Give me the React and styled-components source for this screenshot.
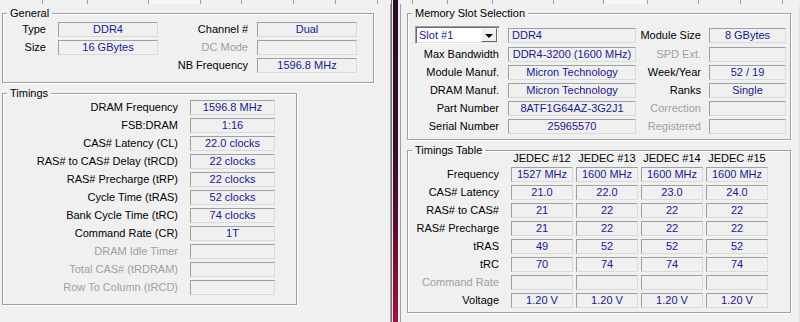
import React from "react";
import styled, { createGlobalStyle } from "styled-components";

const GlobalStyle = createGlobalStyle`
  html, body {
    margin: 0;
    padding: 0;
    background: #f0f0f0;
  }
  body {
    font-family: "Liberation Sans", Arial, sans-serif;
    font-size: 11px;
    color: #000;
  }
`;

const Screen = styled.div`
  display: flex;
  width: 800px;
  height: 322px;
  overflow: hidden;
  background: #f0f0f0;
`;

const Window = styled.div`
  flex: none;
  width: ${(p) => p.w}px;
  display: flex;
  flex-direction: column;
  box-sizing: border-box;
  padding-left: ${(p) => p.padLeft || 0}px;
  border-right: ${(p) => (p.edge ? "1px solid #6d6d6d" : "none")};
`;

const TabStrip = styled.div`
  display: flex;
  height: 4px;
  flex: none;
  margin-left: ${(p) => p.shift || 0}px;
`;

const Tab = styled.div`
  width: ${(p) => p.w}px;
  flex: ${(p) => (p.w ? "none" : "1")};
  box-sizing: border-box;
  border-right: ${(p) => (p.w ? "1px solid #a0a0a0" : "none")};
  background: ${(p) => (p.active ? "#f7f7f7" : "#f0f0f0")};
`;

const Page = styled.div`
  flex: 1;
  display: flex;
  flex-direction: column;
  align-items: flex-start;
  gap: 10px;
  padding: 9px 0 0 ${(p) => p.padLeft}px;
  border-left: ${(p) => (p.left ? "1px solid #a0a0a0" : "none")};
  border-right: 1px solid ${(p) => (p.left ? "#e3e3e3" : "#a0a0a0")};
`;

const Divider = styled.div`
  flex: none;
  width: 6px;
  box-sizing: border-box;
  border-left: 1px solid #f0f0f0;
  background: linear-gradient(
    to bottom,
    #2a0e23 0%,
    #33102a 45%,
    #5a0c31 70%,
    #8c0d3a 88%,
    #a3103f 100%
  );
`;

const Group = styled.div`
  position: relative;
  box-sizing: border-box;
  width: ${(p) => p.w}px;
  border: 1px solid #a0a0a0;
  box-shadow: inset 1px 1px 0 #fff, 1px 1px 0 #fff;
  padding: ${(p) => p.pad};
`;

const GroupTitle = styled.span`
  position: absolute;
  top: -7px;
  left: 4px;
  padding: 0 3px;
  line-height: 13px;
  background: #f0f0f0;
  color: #000;
`;

const Grid = styled.div`
  display: grid;
  grid-template-columns: ${(p) => p.cols};
  grid-auto-rows: 15px;
  grid-template-rows: ${(p) => p.rows || "none"};
  row-gap: 3px;
  column-gap: ${(p) => p.gap || 0}px;
  align-items: center;
`;

const Label = styled.div`
  text-align: right;
  padding-right: ${(p) => p.pr}px;
  line-height: 15px;
  white-space: nowrap;
  color: ${(p) => (p.dim ? "#a0a0a0" : "#000")};
`;

const Field = styled.div`
  box-sizing: border-box;
  height: 15px;
  border: 1px solid;
  border-color: #a0a0a0 #dadada #dadada #a0a0a0;
  line-height: 13px;
  text-align: ${(p) => (p.left ? "left" : "center")};
  padding-left: ${(p) => (p.left ? 3 : 0)}px;
  color: #17179a;
  white-space: nowrap;
  overflow: hidden;
`;

const Head = styled.div`
  text-align: center;
  line-height: 13px;
  padding-top: 1px;
  white-space: nowrap;
`;

const Combo = styled.div`
  box-sizing: border-box;
  width: 85px;
  height: 18px;
  margin-left: 7px;
  display: flex;
  align-items: center;
  justify-content: space-between;
  background: #fff;
  border: 1px solid;
  border-color: #a0a0a0 #fff #fff #a0a0a0;
  box-shadow: inset 1px 1px 0 #696969, inset -1px -1px 0 #e3e3e3;
  padding: 2px;
  color: #17179a;
`;

const ComboText = styled.span`
  padding-left: 1px;
  line-height: 14px;
`;

const ComboButton = styled.div`
  box-sizing: border-box;
  width: 16px;
  height: 14px;
  display: flex;
  align-items: center;
  justify-content: center;
  background: #f0f0f0;
  border: 1px solid;
  border-color: #fff #696969 #696969 #fff;
`;

const Arrow = styled.div`
  width: 0;
  height: 0;
  border-left: 4px solid transparent;
  border-right: 4px solid transparent;
  border-top: 4px solid #000;
  margin-top: 1px;
`;

const leftTabs = [43, 45, 61, 52, 41, 52, 42, 42, 0];
const rightTabs = [15, 35, 45, 61, 50, 44, 51, 42, 42, 0];

const general = [
  ["Type", "DDR4", "Channel #", "Dual"],
  ["Size", "16 GBytes", "DC Mode", null],
  [null, null, "NB Frequency", "1596.8 MHz"],
];

const timings = [
  ["DRAM Frequency", "1596.8 MHz"],
  ["FSB:DRAM", "1:16"],
  ["CAS# Latency (CL)", "22.0 clocks"],
  ["RAS# to CAS# Delay (tRCD)", "22 clocks"],
  ["RAS# Precharge (tRP)", "22 clocks"],
  ["Cycle Time (tRAS)", "52 clocks"],
  ["Bank Cycle Time (tRC)", "74 clocks"],
  ["Command Rate (CR)", "1T"],
  ["DRAM Idle Timer", null],
  ["Total CAS# (tRDRAM)", null],
  ["Row To Column (tRCD)", null],
];

const slotRows = [
  ["Max Bandwidth", "DDR4-3200 (1600 MHz)", "SPD Ext.", null],
  ["Module Manuf.", "Micron Technology", "Week/Year", "52 / 19"],
  ["DRAM Manuf.", "Micron Technology", "Ranks", "Single"],
  ["Part Number", "8ATF1G64AZ-3G2J1", "Correction", null],
  ["Serial Number", "25965570", "Registered", null],
];

const jedec = ["JEDEC #12", "JEDEC #13", "JEDEC #14", "JEDEC #15"];

const table = [
  ["Frequency", ["1527 MHz", "1600 MHz", "1600 MHz", "1600 MHz"]],
  ["CAS# Latency", ["21.0", "22.0", "23.0", "24.0"]],
  ["RAS# to CAS#", ["21", "22", "22", "22"]],
  ["RAS# Precharge", ["21", "22", "22", "22"]],
  ["tRAS", ["49", "52", "52", "52"]],
  ["tRC", ["70", "74", "74", "74"]],
  ["Command Rate", null],
  ["Voltage", ["1.20 V", "1.20 V", "1.20 V", "1.20 V"]],
];

function Tabs({ widths, active, shift }) {
  return (
    <TabStrip shift={shift}>
      {widths.map((w, i) => (
        <Tab key={i} w={w} active={i === active} />
      ))}
    </TabStrip>
  );
}

function MemoryPage() {
  return (
    <Page padLeft={2}>
      <Group w={372} pad="8px 0 9px 0">
        <GroupTitle>General</GroupTitle>
        <Grid cols="55px 100px 99px 100px">
          {general.map(([l1, v1, l2, v2], i) => (
            <React.Fragment key={i}>
              <Label pr={12}>{l1}</Label>
              {l1 ? <Field>{v1}</Field> : <div />}
              <Label pr={9} dim={!v2}>
                {l2}
              </Label>
              <Field>{v2}</Field>
            </React.Fragment>
          ))}
        </Grid>
      </Group>
      <Group w={295} pad="6px 0 9px 0">
        <GroupTitle>Timings</GroupTitle>
        <Grid cols="187px 85px">
          {timings.map(([l, v]) => (
            <React.Fragment key={l}>
              <Label pr={12} dim={!v}>
                {l}
              </Label>
              <Field>{v}</Field>
            </React.Fragment>
          ))}
        </Grid>
      </Group>
    </Page>
  );
}

function SpdPage() {
  return (
    <Page padLeft={6} left>
      <Group w={384} pad="12px 0 5px 0">
        <GroupTitle>Memory Slot Selection</GroupTitle>
        <Grid cols="100px 128px 73px 77px" rows="18px">
          <Combo>
            <ComboText>Slot #1</ComboText>
            <ComboButton>
              <Arrow />
            </ComboButton>
          </Combo>
          <Field left>DDR4</Field>
          <Label pr={8}>Module Size</Label>
          <Field>8 GBytes</Field>
          {slotRows.map(([l1, v1, l2, v2]) => (
            <React.Fragment key={l1}>
              <Label pr={9}>{l1}</Label>
              <Field>{v1}</Field>
              <Label pr={8} dim={!v2}>
                {l2}
              </Label>
              <Field>{v2}</Field>
            </React.Fragment>
          ))}
        </Grid>
      </Group>
      <Group w={384} pad="0 0 4px 0">
        <GroupTitle>Timings Table</GroupTitle>
        <Grid cols="100px 62px 62px 62px 62px" rows="13px" gap={3}>
          <div />
          {jedec.map((j) => (
            <Head key={j}>{j}</Head>
          ))}
          {table.map(([l, vals]) => (
            <React.Fragment key={l}>
              <Label pr={9} dim={!vals}>
                {l}
              </Label>
              {(vals || ["", "", "", ""]).map((v, i) => (
                <Field key={i}>{v}</Field>
              ))}
            </React.Fragment>
          ))}
        </Grid>
      </Group>
    </Page>
  );
}

export default function App() {
  return (
    <>
      <GlobalStyle />
      <Screen>
        <Window w={392} edge>
          <Tabs widths={leftTabs} active={3} />
          <MemoryPage />
        </Window>
        <Divider />
        <Window w={402} padLeft={2}>
          <Tabs widths={rightTabs} active={5} shift={-2} />
          <SpdPage />
        </Window>
      </Screen>
    </>
  );
}
